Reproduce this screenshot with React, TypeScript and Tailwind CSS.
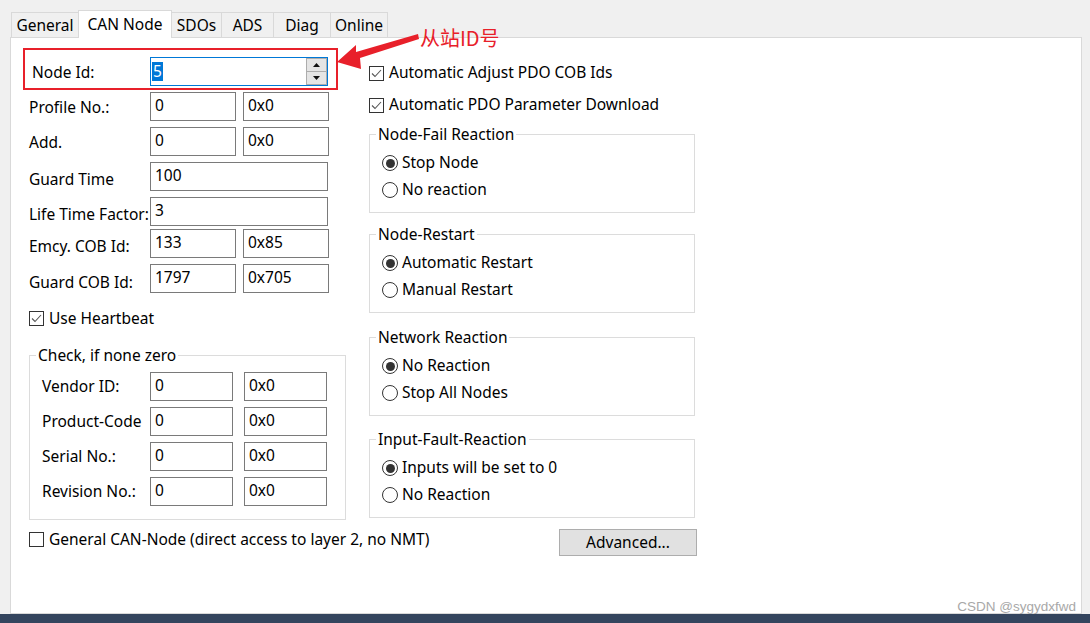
import type { ReactNode } from 'react'

const tabs = [
  { label: 'General', w: 'w-[68px]' },
  { label: 'CAN Node', w: 'w-[94px]', active: true },
  { label: 'SDOs', w: 'w-[51px]' },
  { label: 'ADS', w: 'w-[53px]' },
  { label: 'Diag', w: 'w-[58px]' },
  { label: 'Online', w: 'w-[58px]' },
]

function Field({ value, w = 'w-[86px]' }: { value: string; w?: string }) {
  return (
    <div
      className={`${w} h-[29px] shrink-0 border border-[#7a7a7a] bg-white pl-[4px] pb-[1px] flex items-center`}
    >
      {value}
    </div>
  )
}

function Check({ checked }: { checked?: boolean }) {
  return (
    <div className="w-[15px] h-[15px] shrink-0 border border-[#333] bg-white flex items-center justify-center">
      {checked && (
        <svg width="11" height="9" viewBox="0 0 11 9">
          <polyline points="1,4.5 4,7.5 10,1" fill="none" stroke="#555" strokeWidth="1.1" />
        </svg>
      )}
    </div>
  )
}

function Radio({ on, label }: { on?: boolean; label: string }) {
  return (
    <div className="h-[20px] flex items-center gap-[4px]">
      <div className="w-[16px] h-[16px] rounded-full border border-[#333] bg-white flex items-center justify-center">
        {on && <div className="w-[9px] h-[9px] rounded-full bg-[#333]" />}
      </div>
      <span>{label}</span>
    </div>
  )
}

function Group({ title, className, children }: { title: string; className: string; children: ReactNode }) {
  return (
    <fieldset className={`border border-[#dcdcdc] ${className}`}>
      <legend className="-ml-[6px] px-[2px] leading-[20px]">{title}</legend>
      {children}
    </fieldset>
  )
}

function RadioGroup({ title, a, b, className }: { title: string; a: string; b: string; className: string }) {
  return (
    <Group title={title} className={`w-[326px] pl-[12px] pt-[9px] pb-[12px] ${className}`}>
      <Radio on label={a} />
      <div className="mt-[7px]">
        <Radio label={b} />
      </div>
    </Group>
  )
}

function Row({
  label,
  children,
  className = '',
  drop = '',
}: {
  label: string
  children: ReactNode
  className?: string
  drop?: string
}) {
  return (
    <div className={`flex items-center h-[29px] pl-[6px] ${className}`}>
      <span className={`w-[121px] shrink-0 whitespace-nowrap ${drop}`}>{label}</span>
      <div className="flex gap-[7px]">{children}</div>
    </div>
  )
}

export default function App() {
  return (
    <div className="relative w-[1090px] h-[623px] bg-[#f0f0f0] pt-[10px] flex flex-col text-black text-[15.5px] font-['Noto_Sans',sans-serif] overflow-hidden">
      {/* tab strip */}
      <div className="relative z-10 h-[27px] pl-[11px] flex items-end">
        {tabs.map((t, i) => (
          <div
            key={t.label}
            className={`${t.w} ${i > 0 ? '-ml-px' : ''} border border-b-0 border-[#d9d9d9] flex justify-center ${
              t.active
                ? 'relative z-10 h-[28px] -mb-px bg-white pt-[2px]'
                : 'h-[25px] bg-[#f0f0f0] items-center pt-[1px]'
            }`}
          >
            {t.label}
          </div>
        ))}
      </div>

      {/* panel */}
      <div className="ml-[10px] w-[1072px] h-[577px] border border-[#d9d9d9] bg-white flex pl-[12px] pt-[10px]">
        {/* left column */}
        <div className="w-[323px] flex flex-col">
          <div className="w-[315px] h-[42px] border-2 border-[#e8202a] pl-[7px] pt-[7px] flex items-start">
            <div className="flex items-center h-[29px]">
              <span className="w-[118px] pt-[2px]">Node Id:</span>
              <div className="w-[178px] h-[29px] border border-[#0078d7] flex items-center pl-[1px]">
                <span className="bg-[#0078d7] text-white leading-[19px] px-[1px]">5</span>
                <div className="ml-auto w-[21px] h-[27px] border border-[#adadad] flex flex-col bg-[#e5e5e5]">
                  <div className="flex-1 border-b border-[#adadad] flex items-center justify-center">
                    <svg width="7" height="4" viewBox="0 0 7 4">
                      <polygon points="3.5,0 7,4 0,4" fill="#111" />
                    </svg>
                  </div>
                  <div className="flex-1 flex items-center justify-center">
                    <svg width="7" height="4" viewBox="0 0 7 4">
                      <polygon points="0,0 7,0 3.5,4" fill="#111" />
                    </svg>
                  </div>
                </div>
              </div>
            </div>
          </div>

          <Row label="Profile No.:" className="mt-[2px]" drop="pt-[3px]">
            <Field value="0" />
            <Field value="0x0" />
          </Row>
          <Row label="Add." className="mt-[6px]" drop="pt-[3px]">
            <Field value="0" />
            <Field value="0x0" />
          </Row>
          <Row label="Guard Time" className="mt-[6px]" drop="pt-[7px]">
            <Field value="100" w="w-[178px]" />
          </Row>
          <Row label="Life Time Factor:" className="mt-[6px]" drop="pt-[7px]">
            <Field value="3" w="w-[178px]" />
          </Row>
          <Row label="Emcy. COB Id:" className="mt-[3px]" drop="pt-[7px]">
            <Field value="133" />
            <Field value="0x85" />
          </Row>
          <Row label="Guard COB Id:" className="mt-[6px]" drop="pt-[8px]">
            <Field value="1797" />
            <Field value="0x705" />
          </Row>

          <div className="mt-[16px] ml-[6px] h-[18px] flex items-center gap-[5px]">
            <Check checked />
            <span className="pt-[1px]">Use Heartbeat</span>
          </div>

          <Group title="Check, if none zero" className="mt-[18px] ml-[6px] w-[317px] pl-[12px] pt-[7px] pb-[13px]">
            <div className="flex flex-col gap-[6px]">
              {['Vendor ID:', 'Product-Code', 'Serial No.:', 'Revision No.:'].map((l) => (
                <div key={l} className="flex items-center h-[29px]">
                  <span className="w-[108px] shrink-0 whitespace-nowrap pt-[1px]">{l}</span>
                  <div className="flex gap-[11px]">
                    <Field value="0" w="w-[83px]" />
                    <Field value="0x0" w="w-[83px]" />
                  </div>
                </div>
              ))}
            </div>
          </Group>

          <div className="mt-[11px] ml-[6px] h-[16px] flex items-center gap-[5px] whitespace-nowrap">
            <Check />
            <span className="pt-[1px]">General CAN-Node (direct access to layer 2, no NMT)</span>
          </div>
        </div>

        {/* right column */}
        <div className="ml-[23px] w-[330px] flex flex-col pt-[15px]">
          <div className="h-[20px] flex items-center gap-[5px]">
            <Check checked />
            <span>Automatic Adjust PDO COB Ids</span>
          </div>
          <div className="mt-[12px] h-[20px] flex items-center gap-[5px]">
            <Check checked />
            <span>Automatic PDO Parameter Download</span>
          </div>
          <RadioGroup title="Node-Fail Reaction" a="Stop Node" b="No reaction" className="mt-[9px]" />
          <RadioGroup title="Node-Restart" a="Automatic Restart" b="Manual Restart" className="mt-[11px]" />
          <RadioGroup title="Network Reaction" a="No Reaction" b="Stop All Nodes" className="mt-[14px]" />
          <RadioGroup title="Input-Fault-Reaction" a="Inputs will be set to 0" b="No Reaction" className="mt-[13px]" />
          <button className="mt-[11px] ml-[190px] w-[138px] h-[27px] border border-[#adadad] bg-[#e1e1e1] flex items-center justify-center">
            Advanced...
          </button>
        </div>
      </div>

      <div className="h-[9px] bg-[#34455e]" />

      {/* annotation */}
      <svg className="absolute left-0 top-0 pointer-events-none" width="1090" height="623">
        <polygon points="337,62 356,45 356,52 418,34 419,39 360,58 361,69" fill="#e8202a" />
      </svg>
      <div className="absolute left-[420px] top-[26px] text-[20px] leading-[24px] text-[#e8202a] font-['Noto_Sans_CJK_SC',sans-serif]">
        从站ID号
      </div>
      <div className="absolute right-[14px] top-[597px] text-[13.5px] text-[#a8a8a8] font-['Liberation_Sans',sans-serif]">
        CSDN @sygydxfwd
      </div>
    </div>
  )
}
